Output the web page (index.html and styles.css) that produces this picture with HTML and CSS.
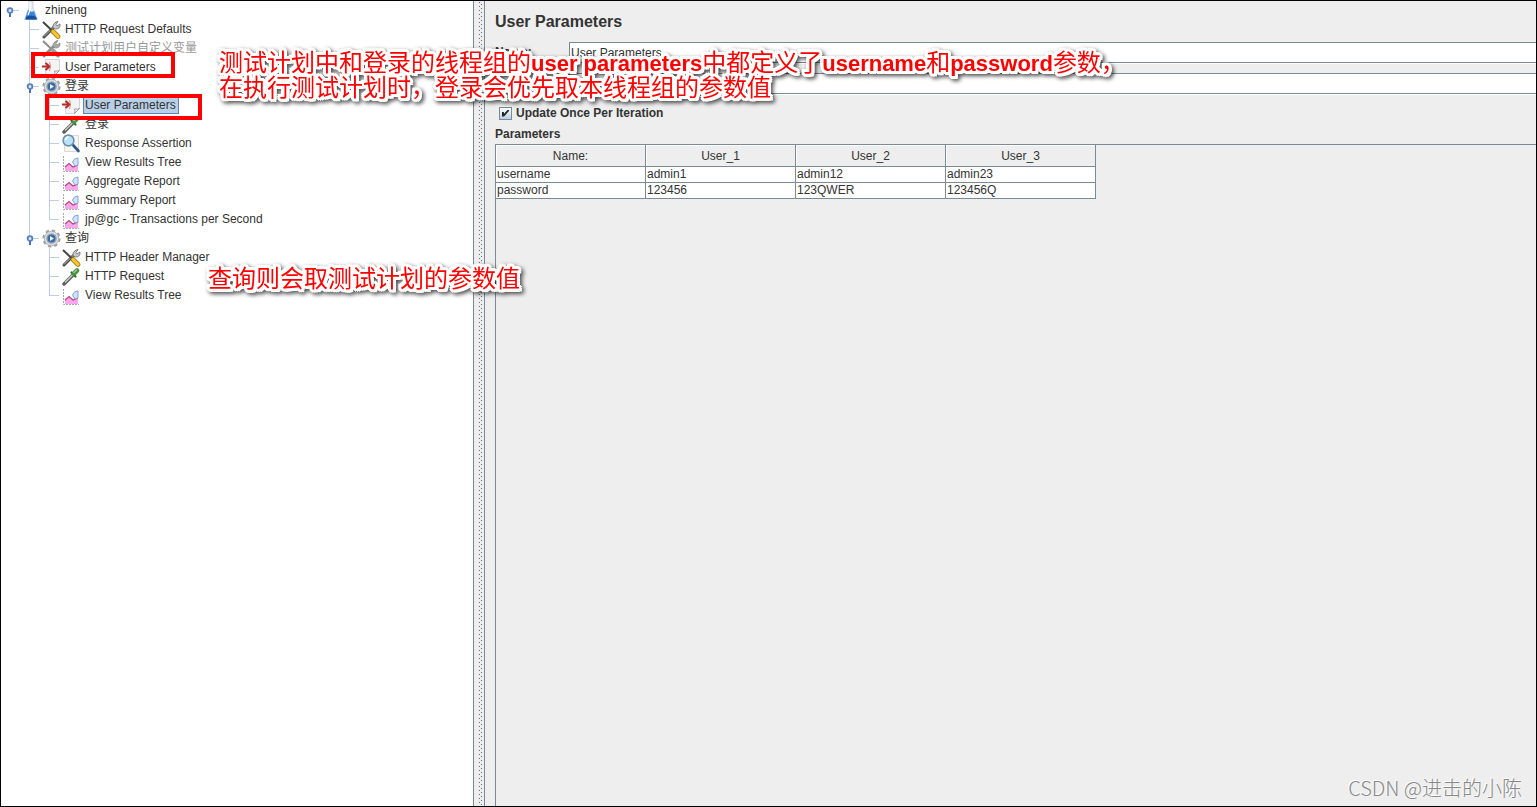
FILE: index.html
```html
<!DOCTYPE html>
<html lang="zh-CN">
<head>
    <meta charset="UTF-8">
    <meta name="viewport" content="width=device-width, initial-scale=1.0">
    <title>User Parameters</title>
    <link rel="stylesheet" href="styles.css">
</head>
<body>
    <!-- Shared icons -->
    <svg class="sprite" aria-hidden="true">
        <symbol id="icon-flask" viewBox="0 0 20 19">
            <path d="M8 0v7L4 17q-1 2 1 2h10q2 0 1-2L12 7V0z" fill="#e3edf6" stroke="#b5c3d0" stroke-width=".7"/>
            <path d="M7 9L4.500 17q-.5 1.500 1 1.500h9q1.500 0 1-1.500L13 10q-3 2-6-1z" fill="#3b86dc"/>
            <path d="M5 16q5-3 10 0l1 2.500H4.500z" fill="#174f9c"/>
            <path d="M9 1v8l-2 5" fill="none" stroke="#fff" stroke-width="1.300"/>
        </symbol>
        <symbol id="icon-tools" viewBox="0 0 20 19">
            <path d="M3 17L13 7" stroke="#4c4c4c" stroke-width="3" stroke-linecap="round"/>
            <path d="M3 16.500L13 6.500" stroke="#b9b9b9" stroke-width="1"/>
            <path d="M12 8q-1-4 3-6l2-.5-2 3 1 1.500 3-2q.5 5-4.500 5z" fill="#c9c9c9" stroke="#666" stroke-width=".8"/>
            <path d="M2 2l9 8.500" stroke="#444" stroke-width="2"/>
            <path d="M12 11.500l5 5" stroke="#8f6a10" stroke-width="4.600" stroke-linecap="round"/>
            <path d="M12 11.500l5 5" stroke="#f6c52d" stroke-width="3.200" stroke-linecap="round"/>
        </symbol>
        <symbol id="icon-tools-off" viewBox="0 0 20 19">
            <path d="M3 17L13 7" stroke="#8d8d8d" stroke-width="3" stroke-linecap="round"/>
            <path d="M12 8q-1-4 3-6l2-.5-2 3 1 1.500 3-2q.5 5-4.500 5z" fill="#aaa" stroke="#888" stroke-width=".8"/>
            <path d="M2 2l9 8.500" stroke="#8d8d8d" stroke-width="2"/>
            <path d="M12 11.500l5 5" stroke="#a0a0a0" stroke-width="4.200" stroke-linecap="round"/>
        </symbol>
        <symbol id="icon-params" viewBox="0 0 20 19">
            <path d="M4.500 1.500h14v11l-5 5h-9z" fill="#f3f3f3" stroke="#d4d4d4"/>
            <path d="M13.500 17.500q1-3 0-4.500 3 .5 5-.5z" fill="#fff" stroke="#888" stroke-width=".8"/>
            <path d="M1 8.500h7M4.500 5L8.500 8.500 4.500 12" fill="none" stroke="#b92b2b" stroke-width="2"/>
            <path d="M8.500 4q2 4.500 0 9" fill="none" stroke="#d88" stroke-width="1"/>
        </symbol>
        <symbol id="icon-gear" viewBox="0 0 20 19">
            <circle cx="10.500" cy="9.500" r="7.800" fill="none" stroke="#a2a2a2" stroke-width="2.600" stroke-dasharray="3.400 2.727"/>
            <circle cx="10.500" cy="9.500" r="7.200" fill="#dedede" stroke="#a8a8a8" stroke-width=".8"/>
            <circle cx="10.500" cy="9.500" r="4.600" fill="#3d6a9f" stroke="#8fa9c4" stroke-width="1.400"/>
            <path d="M9 7l4 2.500L9 12z" fill="#e8f2ff"/>
        </symbol>
        <symbol id="icon-dropper" viewBox="0 0 20 19">
            <path d="M3 17L12 8" stroke="#5d5d5d" stroke-width="3.400" stroke-linecap="round"/>
            <path d="M4 15.500L12 7.500" stroke="#c6cec4" stroke-width="1.400"/>
            <path d="M10.500 5.500l4 4" stroke="#2d6a28" stroke-width="2.200" stroke-linecap="round"/>
            <path d="M13 6.500l3-3" stroke="#4a9040" stroke-width="4.600" stroke-linecap="round"/>
            <path d="M13 5.500l2.500-2.500" stroke="#94ce88" stroke-width="1.600" stroke-linecap="round"/>
        </symbol>
        <symbol id="icon-search" viewBox="0 0 20 19">
            <path d="M3.500 1.500h14v16h-14z" fill="#f6f6f6" stroke="#d8d8d8"/>
            <path d="M12 11l5.500 6" stroke="#2f5683" stroke-width="2.600" stroke-linecap="round"/>
            <circle cx="7.500" cy="6.500" r="5.400" fill="#b9e2f9" stroke="#6f90ae" stroke-width="1.600"/>
            <path d="M4.500 6q.5-3 3-3" fill="none" stroke="#fff" stroke-width="1.500"/>
        </symbol>
        <symbol id="icon-chart" viewBox="0 0 20 19">
            <path d="M2.500 3v15.500H18" fill="none" stroke="#a9a9a9" stroke-dasharray="2 1"/>
            <path d="M4 14l4-3 4 3 5-3v7H4z" fill="#f6a8ea"/>
            <path d="M4 14l4-3.500 4 3.500 5-2" fill="none" stroke="#bb4675" stroke-width="1.300"/>
            <path d="M11.500 9l2-3 3.500-1v7l-3 1z" fill="#cfe4fb" stroke="#7b9cd5" stroke-width=".9"/>
        </symbol>
        <symbol id="icon-handle" viewBox="0 0 8 10">
            <path d="M4 5v5" stroke="#4f6fae" stroke-width="2"/>
            <circle cx="4" cy="3.500" r="2.400" fill="#dce7f7" stroke="#5c7fbf" stroke-width="1.800"/>
        </symbol>
    </svg>

    <div class="window">
        <nav class="tree-pane">
            <ul class="tree">
                <li>
                    <div class="node"><svg class="handle"><use href="#icon-handle"/></svg><svg class="icon"><use href="#icon-flask"/></svg><span class="name">zhineng</span></div>
                    <ul>
                        <li><div class="node"><svg class="icon"><use href="#icon-tools"/></svg><span class="name">HTTP Request Defaults</span></div></li>
                        <li><div class="node disabled"><svg class="icon"><use href="#icon-tools-off"/></svg><span class="name">测试计划用户自定义变量</span></div></li>
                        <li><div class="node"><svg class="icon"><use href="#icon-params"/></svg><span class="name">User Parameters</span><span class="mark"></span></div></li>
                        <li>
                            <div class="node"><svg class="handle"><use href="#icon-handle"/></svg><svg class="icon"><use href="#icon-gear"/></svg><span class="name">登录</span></div>
                            <ul>
                                <li><div class="node"><svg class="icon"><use href="#icon-params"/></svg><span class="name selected">User Parameters</span><span class="mark mark-wide"></span></div></li>
                                <li><div class="node"><svg class="icon"><use href="#icon-dropper"/></svg><span class="name">登录</span></div></li>
                                <li><div class="node"><svg class="icon"><use href="#icon-search"/></svg><span class="name">Response Assertion</span></div></li>
                                <li><div class="node"><svg class="icon"><use href="#icon-chart"/></svg><span class="name">View Results Tree</span></div></li>
                                <li><div class="node"><svg class="icon"><use href="#icon-chart"/></svg><span class="name">Aggregate Report</span></div></li>
                                <li><div class="node"><svg class="icon"><use href="#icon-chart"/></svg><span class="name">Summary Report</span></div></li>
                                <li><div class="node"><svg class="icon"><use href="#icon-chart"/></svg><span class="name">jp@gc - Transactions per Second</span></div></li>
                            </ul>
                        </li>
                        <li>
                            <div class="node"><svg class="handle"><use href="#icon-handle"/></svg><svg class="icon"><use href="#icon-gear"/></svg><span class="name">查询</span></div>
                            <ul>
                                <li><div class="node"><svg class="icon"><use href="#icon-tools"/></svg><span class="name">HTTP Header Manager</span></div></li>
                                <li><div class="node"><svg class="icon"><use href="#icon-dropper"/></svg><span class="name">HTTP Request</span></div></li>
                                <li><div class="node"><svg class="icon"><use href="#icon-chart"/></svg><span class="name">View Results Tree</span></div></li>
                            </ul>
                        </li>
                    </ul>
                </li>
            </ul>
        </nav>

        <div class="divider"></div>

        <main class="editor">
            <h1>User Parameters</h1>
            <div class="field">
                <label for="name">Name:</label>
                <input type="text" id="name" value="User Parameters">
            </div>
            <div class="field">
                <input type="text" class="comments" aria-label="Comments">
            </div>
            <div class="option">
                <input type="checkbox" id="once" checked>
                <label for="once">Update Once Per Iteration</label>
            </div>
            <h2>Parameters</h2>
            <div class="table-pane">
                <table>
                    <thead>
                        <tr><th>Name:</th><th>User_1</th><th>User_2</th><th>User_3</th></tr>
                    </thead>
                    <tbody>
                        <tr><td>username</td><td>admin1</td><td>admin12</td><td>admin23</td></tr>
                        <tr><td>password</td><td>123456</td><td>123QWER</td><td>123456Q</td></tr>
                    </tbody>
                </table>
            </div>
        </main>

        <!-- Notes over the window -->
        <p class="note note-plan">测试计划中和登录的线程组的<b>user parameters</b>中都定义了<b>username</b>和<b>password</b>参数，<br>在执行测试计划时，登录会优先取本线程组的参数值</p>
        <p class="note note-query">查询则会取测试计划的参数值</p>
        <div class="watermark">CSDN @进击的小陈</div>
    </div>
</body>
</html>
```
FILE: styles.css
```css
* {
    box-sizing: border-box;
}

body {
    margin: 0;
    font-family: "Liberation Sans", Arial, "Noto Sans CJK SC", sans-serif;
    font-size: 12px;
    color: #333;
}

.sprite {
    position: absolute;
    width: 0;
    height: 0;
}

.window {
    position: relative;
    display: flex;
    min-height: 100vh;
    overflow: hidden;
    border: 1px solid #000;
    background: #eee;
}

/* Test plan tree */
.tree-pane {
    flex: 0 0 473px;
    padding-left: 8px;
    background: #fff;
    border-right: 1px solid #7a8a99;
}

.tree,
.tree ul {
    list-style: none;
    margin: 0;
    padding: 0;
}

.tree ul {
    margin-left: 20px;
}

.tree li {
    position: relative;
}

.tree ul > li::before {
    content: "";
    position: absolute;
    left: 0;
    top: 0;
    width: 1px;
    height: 100%;
    background: #b8cfe5;
}

.tree ul > li:last-child::before {
    height: 9px;
}

.node {
    position: relative;
    display: flex;
    align-items: center;
    height: 19px;
    padding-left: 12px;
    white-space: nowrap;
}

.node::before {
    content: "";
    position: absolute;
    left: 0;
    top: 9px;
    width: 10px;
    height: 1px;
    background: #b8cfe5;
}

.handle {
    position: absolute;
    left: -3px;
    top: 6px;
    width: 8px;
    height: 10px;
}

.icon {
    width: 20px;
    height: 19px;
    margin-right: 2px;
}

.name {
    height: 17px;
    line-height: 15px;
    padding: 0 2px;
    border: 1px solid transparent;
    border-left-width: 0;
}

.selected {
    background: #b8cfe5;
    border: 1px solid #6382bf;
    padding: 0 2px 0 1px;
}

.disabled {
    color: #999;
}

.mark {
    position: absolute;
    left: 2px;
    top: -6px;
    width: 144px;
    height: 26px;
    border: 4px solid #f00;
    z-index: 1;
}

.mark-wide {
    left: -4px;
    top: -2px;
    width: 157px;
}

.divider {
    flex: 0 0 11px;
    border-right: 1px solid #7a8a99;
    padding: 0 2px 0 5px;
    background:
        conic-gradient(from 270deg at 1px 1px, #667 90deg, transparent 0) 0 1px / 4px 4px,
        conic-gradient(from 270deg at 1px 1px, #667 90deg, transparent 0) 2px 3px / 4px 4px;
    background-origin: content-box;
    background-clip: content-box;
}

/* Element editor */
.editor {
    flex: 1;
    min-width: 0;
    display: flex;
    flex-direction: column;
    padding: 11px 0 0 10px;
}

h1 {
    margin: 0 0 10px;
    font-size: 16px;
    line-height: 20px;
}

.field {
    display: flex;
    margin-bottom: 10px;
}

.field label {
    flex: 0 0 74px;
    font-weight: bold;
    line-height: 21px;
}

.field input {
    flex: 1;
    min-width: 0;
    height: 21px;
    padding: 0 1px;
    border: 1px solid #7a8a99;
    border-right: 0;
    border-radius: 0;
    box-shadow: 0 1px #fff;
    outline: 0;
    background: #fff;
    font: inherit;
    color: inherit;
}

.field .comments {
    margin-left: 74px;
}

.option {
    display: flex;
    align-items: center;
    height: 18px;
    padding-left: 4px;
    font-weight: bold;
}

.option input {
    appearance: none;
    width: 13px;
    height: 13px;
    margin: 0 4px 0 0;
    border: 1px solid #7a8a99;
    background: linear-gradient(#fff, #b8cfe5);
    display: grid;
    place-items: center;
}

.option input:checked::before {
    content: "";
    width: 7px;
    height: 7px;
    background: #222;
    clip-path: polygon(0 35%, 25% 35%, 30% 60%, 85% 0, 100% 0, 100% 20%, 30% 100%, 0 100%);
}

h2 {
    margin: 4px 0 2px;
    font-size: 12px;
    line-height: 16px;
}

.table-pane {
    flex: 1;
    border-top: 1px solid #7a8a99;
    border-left: 1px solid #7a8a99;
}

table {
    width: 600px;
    table-layout: fixed;
    border-collapse: separate;
    border-spacing: 0;
}

th,
td {
    border-right: 1px solid #7a8a99;
    border-bottom: 1px solid #7a8a99;
}

th {
    height: 22px;
    padding: 0;
    font-weight: normal;
    box-shadow: inset 1px 1px #fff;
}

td {
    height: 16px;
    padding: 0 1px;
    line-height: 15px;
    background: #fff;
}

/* Notes */
.note {
    position: absolute;
    margin: 0;
    font-size: 24px;
    line-height: 24px;
    white-space: nowrap;
    color: #f00;
    filter:
        drop-shadow(1px 1px #fff)
        drop-shadow(-1px -1px #fff)
        drop-shadow(2px 0 #fff)
        drop-shadow(-2px 0 #fff)
        drop-shadow(0 2px #fff)
        drop-shadow(0 -2px #fff)
        drop-shadow(2px 2px 2px rgba(0, 0, 0, 0.7));
    z-index: 2;
}

.note b {
    font-size: 22px;
    font-weight: bold;
}

.note-plan {
    left: 218px;
    top: 50px;
}

.note-query {
    left: 207px;
    top: 266px;
}

.watermark {
    position: absolute;
    right: 14px;
    bottom: 6px;
    font-family: "Noto Sans CJK SC", sans-serif;
    font-size: 20px;
    line-height: 24px;
    font-weight: 300;
    color: #888;
    text-shadow: -1px -1px #fff;
}
```
